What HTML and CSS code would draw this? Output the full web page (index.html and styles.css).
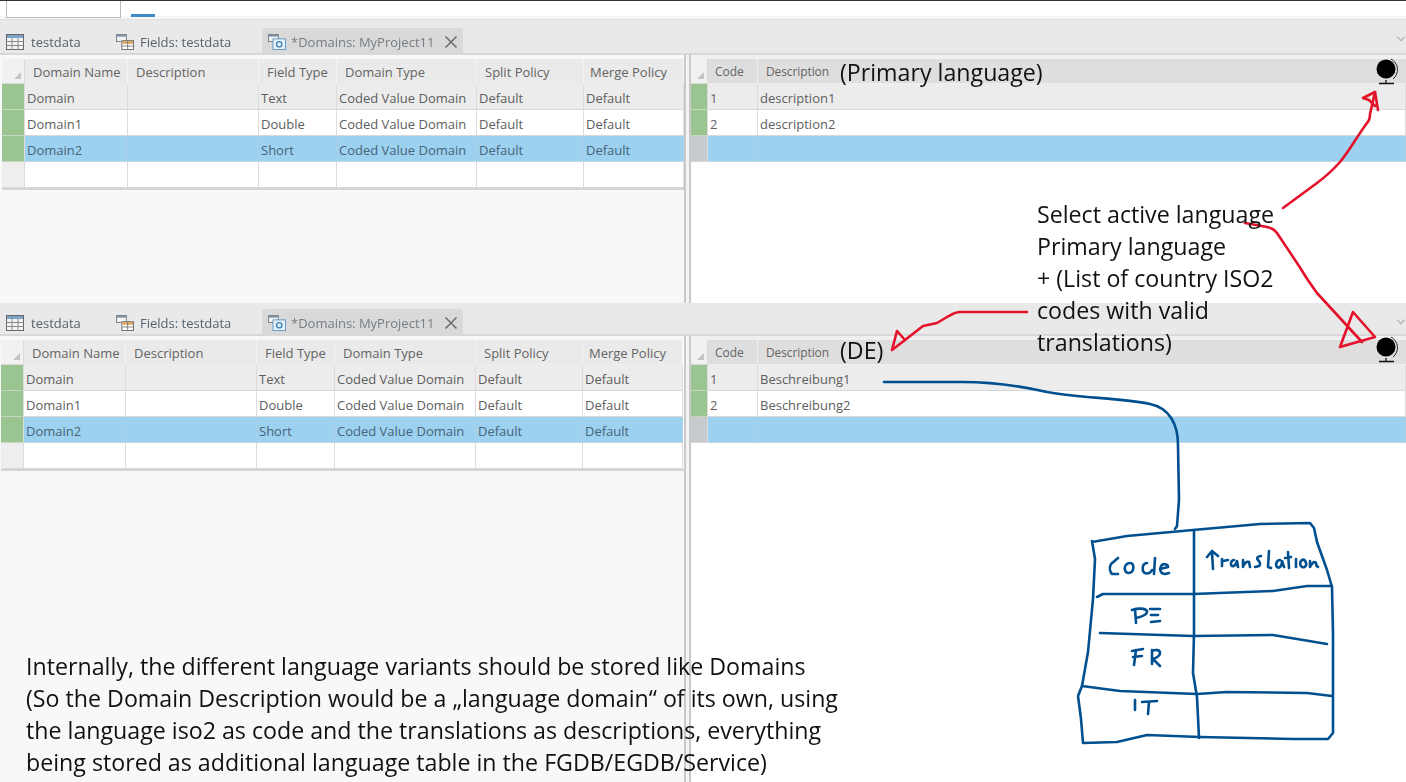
FILE: index.html
```html
<!DOCTYPE html>
<html lang="en">
<head>
<meta charset="utf-8">
<title>Domains</title>
<link rel="stylesheet" href="styles.css">
</head>
<body>
<div class="page">
  <section class="panel panel-top">
    <div class="topstrip"><span class="field"></span><span class="bluebtn"></span></div>
    <div class="tabs">
      <div class="tab t1"><svg class="ic" viewBox="0 0 18 16"><rect x=".5" y=".5" width="17" height="15" fill="#f4f4f4" stroke="#666"/><path d="M1 1h16v3H1z" fill="#7da3c6"/><path d="M.5 7.5h17M.5 11.5h17M6 4v12M12 4v12" stroke="#8a8a8a"/></svg><span>testdata</span></div>
      <div class="tab t2"><svg class="ic" viewBox="0 0 20 18"><rect x=".5" y=".5" width="11" height="8" fill="#f3f3f3" stroke="#777"/><path d="M1 1h10v2H1z" fill="#7d95aa"/><rect x="6.500" y="7.500" width="13" height="10" fill="#fff" stroke="#666"/><path d="M7 8h12v3H7z" fill="#e0a35a"/><path d="M13 8v10M7 13.500h12" stroke="#777"/></svg><span>Fields: testdata</span></div>
      <div class="tab active"><svg class="ic" viewBox="0 0 20 18"><rect x=".5" y=".5" width="11" height="8" fill="#f3f3f3" stroke="#777"/><path d="M1 1h10v2H1z" fill="#7d95aa"/><rect x="5.500" y="5.500" width="14" height="12" fill="#e4f1fa" stroke="#5b93bd"/><circle cx="12.500" cy="11.500" r="3" fill="none" stroke="#3f83b5" stroke-width="1.500"/></svg><span>*Domains: MyProject11</span><svg class="close" viewBox="0 0 14 14"><path d="M1.500 1.500l11 11M12.500 1.500l-11 11" stroke="#6a6a6a" stroke-width="1.500"/></svg></div>
      <span class="chev"></span>
    </div>
    <div class="panes">
      <div class="pane-left">
        <div class="grid grid-left">
          <div class="c corner"><i></i></div><div class="c h">Domain Name</div><div class="c h">Description</div><div class="c h">Field Type</div><div class="c h">Domain Type</div><div class="c h">Split Policy</div><div class="c h last">Merge Policy</div>
          <div class="c rh on"></div><div class="c cur">Domain</div><div class="c cur"></div><div class="c cur">Text</div><div class="c cur">Coded Value Domain</div><div class="c cur">Default</div><div class="c cur">Default</div>
          <div class="c rh on"></div><div class="c">Domain1</div><div class="c"></div><div class="c">Double</div><div class="c">Coded Value Domain</div><div class="c">Default</div><div class="c">Default</div>
          <div class="c rh on"></div><div class="c sel">Domain2</div><div class="c sel"></div><div class="c sel">Short</div><div class="c sel">Coded Value Domain</div><div class="c sel">Default</div><div class="c sel">Default</div>
          <div class="c rh"></div><div class="c"></div><div class="c"></div><div class="c"></div><div class="c"></div><div class="c"></div><div class="c"></div>
        </div>
      </div>
      <div class="splitter"></div>
      <div class="pane-right">
        <div class="grid grid-right">
          <div class="c corner"><i></i></div><div class="c h">Code</div><div class="c h dh">Description</div>
          <div class="c rh on"></div><div class="c cur">1</div><div class="c cur">description1</div>
          <div class="c rh on"></div><div class="c">2</div><div class="c">description2</div>
          <div class="c rh dark"></div><div class="c sel"></div><div class="c sel"></div>
        </div>
      </div>
    </div>
  </section>

  <section class="panel panel-bottom">
    <div class="tabs">
      <div class="tab t1"><svg class="ic" viewBox="0 0 18 16"><rect x=".5" y=".5" width="17" height="15" fill="#f4f4f4" stroke="#666"/><path d="M1 1h16v3H1z" fill="#7da3c6"/><path d="M.5 7.5h17M.5 11.5h17M6 4v12M12 4v12" stroke="#8a8a8a"/></svg><span>testdata</span></div>
      <div class="tab t2"><svg class="ic" viewBox="0 0 20 18"><rect x=".5" y=".5" width="11" height="8" fill="#f3f3f3" stroke="#777"/><path d="M1 1h10v2H1z" fill="#7d95aa"/><rect x="6.500" y="7.500" width="13" height="10" fill="#fff" stroke="#666"/><path d="M7 8h12v3H7z" fill="#e0a35a"/><path d="M13 8v10M7 13.500h12" stroke="#777"/></svg><span>Fields: testdata</span></div>
      <div class="tab active"><svg class="ic" viewBox="0 0 20 18"><rect x=".5" y=".5" width="11" height="8" fill="#f3f3f3" stroke="#777"/><path d="M1 1h10v2H1z" fill="#7d95aa"/><rect x="5.500" y="5.500" width="14" height="12" fill="#e4f1fa" stroke="#5b93bd"/><circle cx="12.500" cy="11.500" r="3" fill="none" stroke="#3f83b5" stroke-width="1.500"/></svg><span>*Domains: MyProject11</span><svg class="close" viewBox="0 0 14 14"><path d="M1.500 1.500l11 11M12.500 1.500l-11 11" stroke="#6a6a6a" stroke-width="1.500"/></svg></div>
      <span class="chev"></span>
    </div>
    <div class="panes">
      <div class="pane-left">
        <div class="grid grid-left">
          <div class="c corner"><i></i></div><div class="c h">Domain Name</div><div class="c h">Description</div><div class="c h">Field Type</div><div class="c h">Domain Type</div><div class="c h">Split Policy</div><div class="c h last">Merge Policy</div>
          <div class="c rh on"></div><div class="c cur">Domain</div><div class="c cur"></div><div class="c cur">Text</div><div class="c cur">Coded Value Domain</div><div class="c cur">Default</div><div class="c cur">Default</div>
          <div class="c rh on"></div><div class="c">Domain1</div><div class="c"></div><div class="c">Double</div><div class="c">Coded Value Domain</div><div class="c">Default</div><div class="c">Default</div>
          <div class="c rh on"></div><div class="c sel">Domain2</div><div class="c sel"></div><div class="c sel">Short</div><div class="c sel">Coded Value Domain</div><div class="c sel">Default</div><div class="c sel">Default</div>
          <div class="c rh"></div><div class="c"></div><div class="c"></div><div class="c"></div><div class="c"></div><div class="c"></div><div class="c"></div>
        </div>
      </div>
      <div class="splitter"></div>
      <div class="pane-right">
        <div class="grid grid-right">
          <div class="c corner"><i></i></div><div class="c h">Code</div><div class="c h dh">Description</div>
          <div class="c rh on"></div><div class="c cur">1</div><div class="c cur">Beschreibung1</div>
          <div class="c rh on"></div><div class="c">2</div><div class="c">Beschreibung2</div>
          <div class="c rh dark"></div><div class="c sel"></div><div class="c sel"></div>
        </div>
      </div>
    </div>
  </section>

  <svg class="ink" viewBox="0 0 1406 782" aria-hidden="true">
    <g fill="none" stroke="#e3122a" stroke-width="2.600" stroke-linecap="round" stroke-linejoin="round">
      <path d="M1283 208l34-25c8-6 16-13 23-21 10-12 18-27 27-39 3-3 3-6 3-9l5-22"/>
      <path d="M1378 110l-3-18-12 6 6 2 6 6"/>
      <path d="M1245 223l22 4c5 1 8 3 10 6l22 33c6 10 12 19 18 27l45 49"/>
      <path d="M1353 312l22 25-35 10 13-35z"/>
      <path d="M1027 312h-67c-5 0-9 3-13 5l-10 6-14 3-18 14"/>
      <path d="M897 331l8 9-13 10 5-19z"/>
    </g>
    <g fill="none" stroke="#004f8f" stroke-width="2.600" stroke-linecap="round" stroke-linejoin="round">
      <path d="M884 382h79c30 0 57 4 84 10 33 6 73 6 103 12 20 4 28 21 28 41l1 55-2 26-2 3"/>
      <path d="M1092 542l35-6 66-6 67-6 50-1 4 5 3 14 10 28 5 17 1 46v100l-5 6-35 0-93-2-53-2-30 7-34 1-2-24-3-23 4-10 6-34 5-53 2-40-3-18"/>
      <path d="M1194 530v103l-1 40 4 24 2 41"/>
      <path d="M1097 597l6-3h90l80-3 34-5h25"/>
      <path d="M1100 633l93 3 80-1 54 9"/>
      <path d="M1082 686l38 5 77 3 30-2 80 1 25 3"/>
      <path d="M1118 558l-7 6c-2 4-1 8 1 10h6M1130 563c-4 0-6 4-5 7 1 4 6 4 8 0 1-4 0-7-3-7M1147 563c-4 0-5 5-4 8 2 4 7 3 9-1M1155 558l-1 16M1160 569l8-2c0-3-5-4-7-1-2 4 0 8 4 8l4-1"/>
      <path d="M1135 609l1 14M1132 610c6-2 13-2 15 1 1 3-5 6-11 7M1150 609h10M1151 615h7M1151 622l9-1"/>
      <path d="M1136 650l-2 15M1132 651l11-2M1133 657l9-1M1152 650v14M1152 651c4-2 8-1 8 2 0 3-4 5-7 6l7 7"/>
      <path d="M1135 700v10M1142 702l15-1M1149 702l-1 12"/>
      <path d="M1212 552l1 17M1207 557l5-6 6 5M1222 559v7M1223 561l5-1M1234 560c-3 0-4 5-2 6 3 1 4-2 5-5l1 6M1243 560v7c1-4 4-6 6-5l1 5M1261 556c-3 0-5 2-3 4 2 2 3 4 1 6l-4 1M1269 551l-1 16 3 1M1280 560c-3 0-5 4-3 7 3 2 5-2 5-6l2 6M1288 552l1 16M1285 558l6-1M1296 559v8M1303 560c-3 0-4 5-1 7 3 1 5-2 4-4-1-3-2-4-4-3M1310 561v6c2-4 4-6 6-4 0 1 0 3 2 4"/>
    </g>
    <g class="globe">
      <circle cx="1386" cy="69" r="9.500"/>
      <path d="M1391 59a12 12 0 0 1 2 20" fill="none" stroke="#222" stroke-width="1"/>
      <path d="M1386 80v3M1379 83.500h15" stroke="#111" stroke-width="1.300"/>
      <circle cx="1386" cy="347" r="9.500"/>
      <path d="M1391 337a12 12 0 0 1 2 20" fill="none" stroke="#222" stroke-width="1"/>
      <path d="M1386 358v3M1379 361.500h15" stroke="#111" stroke-width="1.300"/>
    </g>
  </svg>

  <p class="note label-primary">(Primary language)</p>
  <p class="note label-de">(DE)</p>
  <p class="note callout">Select active language<br>Primary language<br>+ (List of country ISO2<br>codes with valid<br>translations)</p>
  <p class="note footnote">Internally, the different language variants should be stored like Domains<br>(So the Domain Description would be a „language domain“ of its own, using<br>the language iso2 as code and the translations as descriptions, everything<br>being stored as additional language table in the FGDB/EGDB/Service)</p>
</div>
</body>
</html>
```
FILE: styles.css
```css
* { box-sizing: border-box; }
html, body { margin: 0; padding: 0; background: #fff; }
.page {
  position: relative;
  width: 1406px;
  height: 782px;
  overflow: hidden;
  font-family: "Open Sans", "Noto Sans", sans-serif;
  color: #5a5a5a;
  display: flex;
  flex-direction: column;
}
.panel { display: flex; flex-direction: column; filter: blur(.35px); }
.panel-top { height: 303px; }
.panel-bottom { flex: 1; min-height: 0; }

.topstrip {
  height: 20px;
  background: linear-gradient(#fff 15px, #f7f7f7 15px);
  border-top: 1px solid #333;
  border-bottom: 1px solid #e0e0e0;
  padding: 0 0 1px 6px;
  display: flex;
  align-items: flex-end;
  gap: 10px;
}
.field { width: 115px; height: 17px; background: #fff; border: 1px solid #bbb; border-top: 0; }
.bluebtn { width: 24px; height: 3px; margin-bottom: 1px; background: #3f8ccb; }

.tabs {
  height: 35px;
  background: #e9e9e9;
  border-bottom: 2px solid #d8d8d8;
  display: flex;
  align-items: flex-end;
  position: relative;
}
.panel-bottom .tabs { height: 33px; }
.tab {
  height: 25px;
  padding-top: 2px;
  display: flex;
  align-items: center;
  font-size: 13px;
  white-space: nowrap;
  color: #55626c;
}
.tab .ic { width: 18px; height: 16px; margin-right: 7px; flex: none; }
.t1 { width: 115px; padding-left: 6px; }
.t2 { width: 147px; padding-left: 0; }
.t2 .ic { margin-left: 1px; margin-right: 6px; }
.active {
  width: 201px;
  padding-left: 6px;
  background: #d9d9d9;
  border-radius: 4px 4px 0 0;
  color: #767d83;
}
.active .ic { margin-right: 5px; }
.close { width: 14px; height: 14px; margin-left: 10px; flex: none; }
.chev {
  position: absolute;
  right: 2px;
  top: 14px;
  width: 6px;
  height: 6px;
  border-right: 1px solid #aaa;
  border-bottom: 1px solid #aaa;
  transform: rotate(45deg);
}

.panes { flex: 1; min-height: 0; display: flex; }
.pane-left { width: 684px; flex: none; background: #f8f8f8; padding: 4px 0 0 2px; }
.panel-bottom .pane-left { padding-left: 1px; }
.splitter {
  width: 7px;
  flex: none;
  background: #f4f4f4;
  border-left: 2px solid #c9c9c9;
  border-right: 2px solid #c9c9c9;
}
.pane-right { flex: 1; min-width: 0; background: linear-gradient(#f0f0f0 4px, #fff 4px); padding-top: 4px; }

.grid { display: grid; }
.grid-left {
  grid-template-columns: 23px 103px 131px 78px 140px 107px 100px;
  grid-template-rows: 25px 26px 26px 26px 26px;
  border-bottom: 2px solid #d4d4d4;
  background: #fff;
}
.panel-bottom .grid-left { grid-template-columns: 23px 102px 131px 78px 141px 107px 100px; }
.grid-right {
  grid-template-columns: 17px 50px 1fr;
  grid-template-rows: 25px 26px 26px 26px;
}
.c {
  font-size: 13px;
  line-height: 27px;
  white-space: nowrap;
  overflow: hidden;
  padding: 1px 0 0 2px;
  border-right: 1px solid #dcdcdc;
  border-bottom: 1px solid #d8d8d8;
  background: #fff;
  color: #5e5e5e;
}
.h { background: #eaeaea; padding: 0 0 0 8px; border-right-color: #f4f4f4; border-bottom-color: #eee; color: #646464; line-height: 26px; }
.h.last { padding-left: 6px; }
.grid-right .h { background: #dedede; border-right-color: #eee; font-size: 12px; padding-left: 7px; }
.grid-right .dh { padding-left: 8px; border-right: 0; letter-spacing: -.1px; }
.corner { background: #f1f1f1; position: relative; padding: 0; }
.corner i {
  position: absolute;
  right: 3px;
  bottom: 4px;
  width: 0;
  height: 0;
  border-left: 7px solid transparent;
  border-bottom: 7px solid #c4c4c4;
}
.rh { background: #eeeeee; padding: 0; }
.rh.on { background: #9ac590; border-bottom-color: #c4d7bf; border-right-color: #dcdcdc; }
.rh.dark { background: #c8cbce; }
.cur { background: #ececec; }
.sel { background: #9dd1f0; color: #476478; border-right-color: #a9cfe6; border-bottom-color: #c4d6e2; }

.ink { position: absolute; left: 0; top: 0; width: 1406px; height: 782px; pointer-events: none; }
.note {
  position: absolute;
  margin: 0;
  font-family: "Open Sans", "Noto Sans", sans-serif;
  font-size: 23.200px;
  line-height: 32px;
  color: #111;
  white-space: nowrap;
}
.label-primary { left: 840px; top: 56px; }
.label-de { left: 840px; top: 334px; }
.callout { left: 1037px; top: 198px; }
.footnote { left: 26px; top: 650px; }
```
